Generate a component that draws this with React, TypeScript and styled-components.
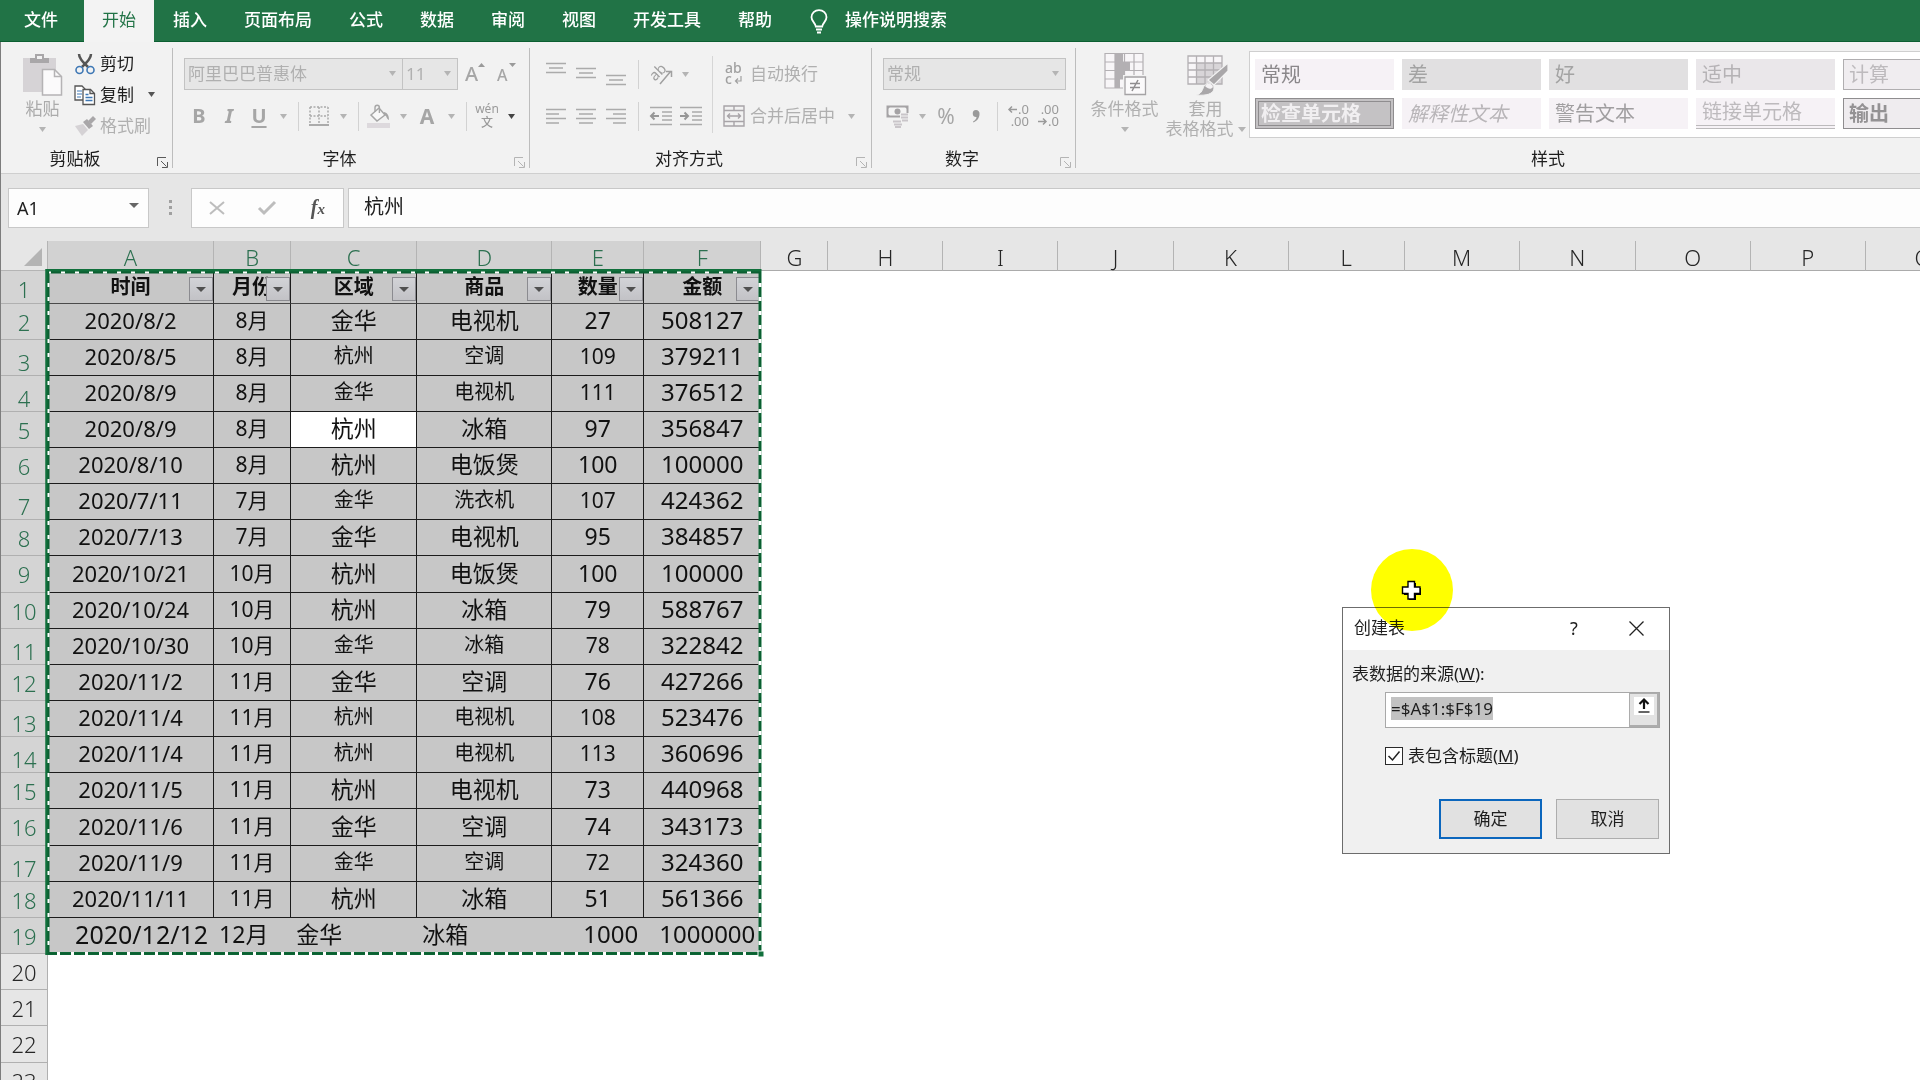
import React, { useEffect, useRef } from "react";
import styled, { createGlobalStyle, css } from "styled-components";

const GlobalStyle = createGlobalStyle`
  *, *::before, *::after { box-sizing: border-box; }
  html, body { margin: 0; padding: 0; }
  body {
    font-family: "Noto Sans", "Noto Sans CJK SC", sans-serif;
    font-size: 17px;
    line-height: 20px;
    color: #1e1e1e;
    background: #fff;
    overflow: hidden;
  }
  button, input, select { font: inherit; color: inherit; margin: 0; }
  button { padding: 0; border: 0; background: none; }
  svg { overflow: visible; }
`;

const Window = styled.div`
  position: relative;
  display: flex;
  flex-direction: column;
  height: 100vh;
  overflow: hidden;
`;

/* ---------- tab strip ---------- */

const TabStrip = styled.nav`
  display: flex;
  flex: none;
  height: 42px;
  background: #217346;
  border-bottom: 1px solid #0c5f32;
  color: #fff;
`;

const Tab = styled.button<{ $active?: boolean; $file?: boolean }>`
  height: 42px;
  padding: 0 18px 3px;
  margin-right: 1px;
  white-space: nowrap;
  font-weight: 500;
  ${(p) => p.$file && css`width: 84px; margin-right: 0; padding-right: 20px;`}
  ${(p) => p.$active && css`background: #f3f3f3; color: #217346; font-weight: 400;`}
`;

const TellMe = styled.button`
  display: flex;
  align-items: center;
  gap: 17px;
  height: 42px;
  margin-left: 19px;
  padding-bottom: 3px;
  font-weight: 500;
  svg { margin-top: 4px; }
`;

/* ---------- ribbon ---------- */

const Body = styled.main`
  display: flex;
  flex-direction: column;
  flex: 1;
  min-height: 0;
  border-left: 1px solid #7d7d7d;
`;

const Ribbon = styled.section`
  display: flex;
  flex: none;
  height: 132px;
  padding: 6px 0 5px;
  background: #f2f2f2;
  border-bottom: 1px solid #cfcfcf;
  overflow: hidden;
`;

const Group = styled.div<{ $w: number }>`
  display: flex;
  flex-direction: column;
  flex: none;
  width: ${(p) => p.$w}px;
  border-right: 1px solid #bdbdbd;
`;

const GroupBody = styled.div<{ $pad?: number }>`
  flex: 1;
  display: flex;
  min-height: 0;
  padding-left: ${(p) => p.$pad ?? 11}px;
`;

const GroupFooter = styled.div<{ $left?: number }>`
  display: flex;
  align-items: center;
  height: 20px;
  padding: 2px 4px 0 ${(p) => p.$left ?? 0}px;
  span { flex: 1; padding-right: 8px; text-align: center; }
`;

const Launch = styled.button<{ $dim?: boolean }>`
  display: flex;
  align-items: flex-end;
  width: 11px;
  height: 18px;
  color: ${(p) => (p.$dim ? "#b4b4b4" : "#5a5a5a")};
`;

const Rows = styled.div`
  display: flex;
  flex-direction: column;
  gap: 12px;
  padding-top: 10px;
`;

const Row = styled.div<{ $h: number }>`
  display: flex;
  align-items: center;
  height: ${(p) => p.$h}px;
`;

const Tool = styled.button<{ $w?: number; $size?: number; $bold?: boolean; $italic?: boolean; $line?: boolean }>`
  display: flex;
  align-items: center;
  justify-content: center;
  width: ${(p) => p.$w ?? 30}px;
  height: 28px;
  color: #a6a6a6;
  font-size: ${(p) => p.$size ?? 20}px;
  font-weight: ${(p) => (p.$bold ? 700 : 400)};
  font-style: ${(p) => (p.$italic ? "italic" : "normal")};
  text-decoration: ${(p) => (p.$line ? "underline" : "none")};
  text-underline-offset: 3px;
`;

const Divider = styled.span`
  width: 1px;
  height: 29px;
  margin: 0 5px 0 6px;
  background: #d2d2d2;
`;

const SelectBox = styled.span<{ $w: number }>`
  position: relative;
  width: ${(p) => p.$w}px;
  height: 32px;
  & + & { margin-left: -1px; margin-right: 1px; }
  select {
    width: 100%;
    height: 100%;
    padding: 0 3px;
    appearance: none;
    border: 1px solid #c3c3c3;
    border-radius: 0;
    background: #e6e6e6;
    color: #b0b0b0;
    opacity: 1;
  }
  svg { position: absolute; right: 7px; top: 13px; pointer-events: none; }
`;

const Paste = styled.button`
  display: flex;
  flex-direction: column;
  align-items: center;
  width: 41px;
  height: 100px;
  padding-top: 5px;
  gap: 3px;
  color: #ababab;
  svg:last-child { margin-top: 5px; }
`;

const ClipList = styled.div`
  display: flex;
  flex-direction: column;
  padding: 0 0 0 11px;
`;

const ClipButton = styled.button<{ $dim?: boolean }>`
  display: flex;
  align-items: center;
  gap: 4px;
  height: 31px;
  color: ${(p) => (p.$dim ? "#b0b0b0" : "#1e1e1e")};
  span { margin-right: 10px; }
`;

const AlignLeft = styled.div`
  width: 172px;
  height: 77px;
  margin-top: 8px;
  border-right: 1px solid #d6d6d6;
  ${Rows} { padding-top: 2px; }
  ${Divider} { margin: 0 7px; }
`;

const WideTool = styled.button`
  display: flex;
  align-items: center;
  gap: 3px;
  height: 28px;
  padding-left: 8px;
  color: #b0b0b0;
  > svg:first-child { width: 26px; }
  > svg:last-child:not(:first-child) { margin-left: 10px; }
`;

const BigTool = styled.button<{ $w: number }>`
  display: flex;
  flex-direction: column;
  align-items: center;
  width: ${(p) => p.$w}px;
  height: 96px;
  padding-top: 4px;
  gap: 3px;
  color: #b0b0b0;
  white-space: nowrap;
  > svg:last-child { margin-top: 5px; }
`;

const BigLine = styled.span`
  display: flex;
  align-items: center;
  gap: 4px;
  margin-top: -3px;
`;

const Gallery = styled.div`
  display: grid;
  grid-template-columns: repeat(5, 139px);
  grid-auto-rows: 31px;
  gap: 8px;
  flex: 1;
  height: 87px;
  margin-top: 3px;
  padding: 7px 5px;
  background: #fff;
  border: 1px solid #cfcfcf;
  overflow: hidden;
`;

type TileKind = "plain" | "grey" | "mid" | "check" | "italic" | "warn" | "link" | "box" | "boxbold";
const tileLook: Record<TileKind, ReturnType<typeof css>> = {
  plain: css`background: #f6f2f6; color: #8b888b;`,
  grey: css`background: #e1e0e1; color: #a3a3a3;`,
  mid: css`background: #eae7ea; color: #b5b2b5;`,
  check: css`background: #c4c2c4; color: #f1eff1; font-weight: 700; border: 4px double #8f8d8f; padding-left: 2px; line-height: 20px;`,
  italic: css`background: #f6f2f6; color: #b8b5b8; font-style: italic;`,
  warn: css`background: #f6f2f6; color: #a09ea0;`,
  link: css`background: #f6f2f6; color: #bdbabd; border-bottom: 4px double #bcbabc;`,
  box: css`background: #f0edf0; color: #bdbabd; border: 1px solid #b0aeb0; padding-left: 5px;`,
  boxbold: css`background: #efecef; color: #949294; font-weight: 700; border: 1px solid #8f8d8f; padding-left: 5px;`,
};
const Tile = styled.button<{ $kind: TileKind }>`
  height: 31px;
  padding-left: 6px;
  text-align: left;
  font-size: 20px;
  line-height: 24px;
  white-space: nowrap;
  overflow: hidden;
  ${(p) => tileLook[p.$kind]}
`;

/* ---------- formula bar ---------- */

const FormulaBar = styled.section`
  display: flex;
  align-items: center;
  flex: none;
  height: 67px;
  padding: 0 0 0 7px;
  background: #e6e6e6;
`;

const BarBox = styled.div<{ $w?: number }>`
  display: flex;
  align-items: center;
  height: 40px;
  background: #fdfdfd;
  border: 1px solid #c8c8c8;
  ${(p) => (p.$w ? css`width: ${p.$w}px;` : css`flex: 1; margin-left: 4px; border-right: 0;`)}
  input {
    flex: 1;
    min-width: 0;
    height: 100%;
    border: 0;
    outline: 0;
    background: none;
  }
`;
const NameInput = styled.input`
  padding: 0 0 0 8px;
  font-size: 18px;
`;
const FormulaInput = styled.input`
  padding: 0 0 4px 15px;
  font-size: 20px;
`;
const NameArrow = styled.button`
  display: flex;
  align-items: center;
  justify-content: center;
  width: 28px;
  height: 38px;
  padding-bottom: 4px;
`;
const Dots = styled.span`
  display: flex;
  justify-content: center;
  width: 42px;
`;
const FxButton = styled.button`
  display: flex;
  justify-content: center;
  width: 51px;
  color: #bdbdbd;
`;
const Fx = styled.span`
  color: #555;
  font-family: "Liberation Serif", serif;
  font-style: italic;
  font-weight: 700;
  font-size: 20px;
  small { font-size: 15px; }
`;

/* ---------- sheet ---------- */

const SheetArea = styled.section`
  position: relative;
  flex: 1;
  min-height: 0;
  overflow: hidden;
  background: #fff;
`;

const Sheet = styled.table`
  table-layout: fixed;
  width: 1980px;
  border-collapse: separate;
  border-spacing: 0;
`;

const SheetRow = styled.tr<{ $h: number }>`
  height: ${(p) => p.$h}px;
`;

const ColHead = styled.th<{ $on?: boolean }>`
  padding: 2px 0 0;
  font-size: 22px;
  font-weight: 300;
  line-height: 24px;
  background: ${(p) => (p.$on ? "#d2d2d2" : "#e6e6e6")};
  color: ${(p) => (p.$on ? "#2c7050" : "#262626")};
  border-right: 1px solid #b4b4b4;
  border-bottom: 1px solid #ababab;
`;

const Corner = styled.td`
  padding: 0 5px 4px;
  text-align: right;
  vertical-align: bottom;
  line-height: 0;
  background: #e6e6e6;
  border-right: 1px solid #b4b4b4;
  border-bottom: 1px solid #b4b4b4;
`;

const RowHead = styled.th<{ $on?: boolean; $drop?: number }>`
  padding: ${(p) => p.$drop ?? 0}px 0 0;
  font-size: 22px;
  font-weight: 300;
  line-height: 24px;
  background: ${(p) => (p.$on ? "#d4d4d4" : "#e6e6e6")};
  color: ${(p) => (p.$on ? "#2c7050" : "#262626")};
  border-right: 1px solid #b0b0b0;
  border-bottom: 1px solid #b0b0b0;
`;

const Cell = styled.td<{ $size: number; $align?: string; $open?: boolean; $active?: boolean; $head?: boolean }>`
  position: relative;
  padding: 0 5px ${(p) => (p.$head ? 0 : 3)}px;
  overflow: hidden;
  white-space: nowrap;
  font-size: ${(p) => p.$size}px;
  font-weight: ${(p) => (p.$head ? 700 : 400)};
  line-height: 28px;
  text-align: ${(p) => p.$align ?? "center"};
  color: #111;
  background: ${(p) => (p.$active ? "#fff" : "#c7c7c7")};
  border-right: 1px solid ${(p) => (p.$open ? "#c7c7c7" : "#1c1c1c")};
  border-bottom: 1px solid ${(p) => (p.$head ? "#4a4a4a" : "#1c1c1c")};
`;

const FilterButton = styled.button`
  position: absolute;
  right: 0;
  bottom: 2px;
  display: flex;
  align-items: center;
  justify-content: center;
  width: 24px;
  height: 24px;
  border: 1px solid #8b8b90;
  background: linear-gradient(#d2d3d7, #c2c2c6);
  color: #505050;
`;

const Marquee = styled.svg`
  position: absolute;
  left: 0;
  top: 0;
  pointer-events: none;
`;

/* ---------- dialog ---------- */

const Dialog = styled.form`
  position: absolute;
  left: 1342px;
  top: 607px;
  width: 328px;
  background: #f0f0f0;
  border: 1px solid #6c6c6c;
`;
const DialogTitle = styled.header`
  display: flex;
  align-items: center;
  height: 42px;
  padding: 0 2px 2px 11px;
  background: #fff;
  h2 { flex: 1; margin: 0; font-size: 17px; font-weight: 400; }
`;
const TitleButton = styled.button`
  display: flex;
  align-items: center;
  justify-content: center;
  width: 62px;
  height: 40px;
  font-size: 18px;
`;
const DialogBody = styled.div`
  padding: 14px 9px 14px 9px;
  label { display: block; }
`;
const RangeField = styled.div`
  display: flex;
  height: 36px;
  margin: 8px 0 0 33px;
  border: 1px solid #a8a8a8;
  background: #fff;
  input {
    flex: 1;
    min-width: 0;
    height: 100%;
    padding: 0 5px 4px;
    border: 0;
    outline: 0;
    background: none;
  }
  input::selection { background: #c2c2c2; color: #1e1e1e; }
`;
const RangeButton = styled.button`
  display: flex;
  justify-content: center;
  width: 30px;
  padding-top: 3px;
  background: #e3e3e3;
  border: 2px solid #acacac;
  border-width: 1px 2px 2px 1px;
`;
const CheckRow = styled.div`
  display: flex;
  align-items: center;
  gap: 5px;
  margin: 18px 0 0 33px;
`;
const CheckBox = styled.span`
  position: relative;
  display: flex;
  input {
    width: 18px;
    height: 18px;
    appearance: none;
    border: 1px solid #2a2a2a;
    background: #fff;
  }
  svg { position: absolute; left: 2px; top: 2px; pointer-events: none; }
`;
const DialogButtons = styled.div`
  display: flex;
  justify-content: flex-end;
  gap: 14px;
  margin-top: 33px;
  padding-right: 1px;
`;
const DialogButton = styled.button<{ $primary?: boolean }>`
  width: 103px;
  height: 40px;
  background: #e1e1e1;
  border: ${(p) => (p.$primary ? "2px solid #0b66bd" : "1px solid #adadad")};
`;

const Halo = styled.div`
  position: absolute;
  left: 1371px;
  top: 549px;
  width: 82px;
  height: 82px;
  border-radius: 50%;
  background: #ffff00;
  mix-blend-mode: multiply;
  pointer-events: none;
`;
const Pointer = styled.svg`
  position: absolute;
  left: 1401px;
  top: 580px;
  pointer-events: none;
`;

/* ---------- drawings ---------- */

const Caret = ({ color = "#b4b4b4", w = 7 }: { color?: string; w?: number }) => (
  <svg width={w} height="5" viewBox="0 0 8 5" fill={color} preserveAspectRatio="none" aria-hidden="true">
    <path d="M0 0h8L4 5z" />
  </svg>
);

const CaretTool = ({ label, color }: { label: string; color?: string }) => (
  <Tool $w={18} aria-label={label}><Caret color={color} /></Tool>
);

const LaunchIcon = () => (
  <svg width="11" height="11" viewBox="0 0 11 11" fill="none" stroke="currentColor" aria-hidden="true">
    <path d="M.5 9V.5H9M4 4l5.500 5.500M10.500 5v5.500H5" />
  </svg>
);

const Lines = ({ d, w = 20, h = 20, sw = 1.5 }: { d: string; w?: number; h?: number; sw?: number }) => (
  <svg width={w} height={h} viewBox={`0 0 ${w} ${h}`} fill="none" stroke="#ababab" strokeWidth={sw} aria-hidden="true">
    <path d={d} />
  </svg>
);

const BulbIcon = () => (
  <svg width="18" height="25" viewBox="0 0 18 25" fill="none" stroke="#fff" strokeWidth="1.8" aria-hidden="true">
    <path d="M5.800 17.500C5.500 13.800 1.500 12.500 1.500 8.300a7.500 7.200 0 0 1 15 0c0 4.200-4 5.500-4.300 9.200zM6 20.500h6M7 23.500h4" />
  </svg>
);

const PasteIcon = () => (
  <svg width="41" height="43" viewBox="0 0 41 43" aria-hidden="true">
    <path d="M1 5h33v34H1z" fill="#d6d3d6" />
    <path d="M8 10V5h5V1h9v4h5v5z" fill="#a9a7a9" />
    <path d="M15 3h5v3h-5z" fill="#f2f2f2" />
    <path d="M20.500 16.500h12l7 7v18.500h-19z" fill="#fbfafb" stroke="#b5b3b5" strokeWidth="1.500" />
    <path d="M32.500 16.500v7h7" fill="none" stroke="#b5b3b5" strokeWidth="1.500" />
  </svg>
);

const CutIcon = () => (
  <svg width="22" height="22" viewBox="0 0 22 22" fill="none" aria-hidden="true">
    <path d="M5 1c0 4 3 7 9 13M17 1c0 4-3 7-9 13" stroke="#555" strokeWidth="2.500" />
    <circle cx="5.500" cy="17" r="3.500" stroke="#3f78b5" strokeWidth="1.600" />
    <circle cx="16.500" cy="17" r="3.500" stroke="#3f78b5" strokeWidth="1.600" />
  </svg>
);

const CopyIcon = () => (
  <svg width="22" height="22" viewBox="0 0 22 22" aria-hidden="true">
    <path d="M1 2h7l3 3v11H1z" fill="#fff" stroke="#555" strokeWidth="1.300" />
    <path d="M3 7h5M3 10h5M3 13h4" stroke="#3f78b5" strokeWidth="1.200" />
    <path d="M9 5.500h7.500l4 4V20.500H9z" fill="#fff" stroke="#555" strokeWidth="1.300" />
    <path d="M16 5.500v4h4.500" fill="none" stroke="#555" strokeWidth="1.300" />
    <path d="M11.500 10.500h3M11.500 13.500h7M11.500 16.500h7" stroke="#3f78b5" strokeWidth="1.300" />
  </svg>
);

const BrushIcon = () => (
  <svg width="22" height="22" viewBox="0 0 22 22" aria-hidden="true">
    <path d="M1 11l8-2 5 6-6 6z" fill="#d5d2d5" />
    <path d="M9 7l4-3 6 7-4 3z" fill="#a9a7a9" />
    <path d="M14 6l5-5 3 3-5 5z" fill="#a9a7a9" />
  </svg>
);

const GrowFont = ({ down }: { down?: boolean }) => (
  <svg width="22" height="22" viewBox="0 0 22 22" aria-hidden="true">
    <text x="1" y="18" fontSize={down ? 16 : 20} fontWeight="500" fill="#a6a6a6">A</text>
    <path d={down ? "M13 0h7l-3.500 4z" : "M14 4h7l-3.500-4z"} fill="#9a9a9a" />
  </svg>
);

const BorderIcon = () => (
  <svg width="20" height="20" viewBox="0 0 20 20" fill="none" stroke="#ababab" strokeWidth="1.500" aria-hidden="true">
    <path d="M1 1h18M1 10h18M1 1v17M10 1v17M19 1v17" strokeDasharray="2 1.500" />
    <path d="M0 19h20" strokeWidth="2" />
  </svg>
);

const BucketIcon = () => (
  <svg width="24" height="24" viewBox="0 0 24 24" aria-hidden="true">
    <path d="M4 11l8-7 6 7-8 6z" fill="#f8f8f8" stroke="#a6a6a6" strokeWidth="1.500" />
    <path d="M8 8V3.500a2.200 2.200 0 0 1 4.400 0V9" fill="none" stroke="#a6a6a6" strokeWidth="1.400" />
    <path d="M17 8c4 1 5 4 5 8-3-1-2-5-5-5z" fill="#a6a6a6" />
    <path d="M0 19h23v5H0z" fill="#ddd9dd" />
  </svg>
);

const PhoneticIcon = () => (
  <svg width="24" height="26" viewBox="0 0 24 26" fill="#9a9a9a" aria-hidden="true">
    <text x="12" y="10" fontSize="12" textAnchor="middle">wén</text>
    <text x="12" y="24" fontSize="12" textAnchor="middle" fontWeight="500">文</text>
  </svg>
);

const OrientIcon = () => (
  <svg width="24" height="24" viewBox="0 0 24 24" aria-hidden="true">
    <text x="4" y="19" fontSize="15" fill="#a0a0a0" transform="rotate(-45 6 17)">ab</text>
    <path d="M11 22L22 9M17 9.500h5.500V15" fill="none" stroke="#a0a0a0" strokeWidth="1.500" />
  </svg>
);

const WrapIcon = () => (
  <svg width="26" height="24" viewBox="0 0 26 24" fill="#a0a0a0" aria-hidden="true">
    <text x="4" y="11" fontSize="14" fontWeight="500">ab</text>
    <text x="4" y="22" fontSize="14" fontWeight="500">c</text>
    <path d="M20 14v5h-5M17 16.500L14.500 19l2.500 2.500" fill="none" stroke="#a0a0a0" strokeWidth="1.200" />
  </svg>
);

const MergeIcon = () => (
  <svg width="26" height="22" viewBox="0 0 26 22" fill="none" stroke="#a8a4a8" strokeWidth="1.400" aria-hidden="true">
    <path d="M3 1h20v20H3zM3 5.500h20M3 16.500h20M13 1v4.500M13 16.500V21M6.500 11h13M9 8.500L6.500 11 9 13.500M17 8.500l2.500 2.500-2.500 2.500" />
  </svg>
);

const IndentIcon = ({ out }: { out?: boolean }) => (
  <svg width="22" height="20" viewBox="0 0 22 20" fill="none" stroke="#ababab" strokeWidth="1.500" aria-hidden="true">
    <path d="M0 1.500h22M12 6h10M12 10h10M12 14h10M0 18.500h22" />
    <path d={out ? "M1 10h8M4.500 6.500L1 10l3.500 3.500" : "M0 10h8M4.500 6.500L8 10l-3.500 3.500"} stroke="#979797" strokeWidth="2" />
  </svg>
);

const CurrencyIcon = () => (
  <svg width="24" height="24" viewBox="0 0 24 24" aria-hidden="true">
    <path d="M1.500 2.500h20v10h-20z" fill="#f4f4f4" stroke="#a5a3a5" strokeWidth="2" />
    <path d="M1 2h4L1 6zM22 2v4l-4-4zM1 13V9l4 4z" fill="#a5a3a5" />
    <circle cx="11.500" cy="7.500" r="3" fill="#a5a3a5" />
    <path d="M14 9h9v6h-9z" fill="#f2f2f2" />
    <path d="M15 10.500h7M15 13.500h7M7 17.500h8M16 16.500h6M8 20.500h8M9 23h6" stroke="#c9c5c9" strokeWidth="1.800" />
  </svg>
);

const DecimalIcon = ({ less }: { less?: boolean }) => (
  <svg width="24" height="26" viewBox="0 0 24 26" fill="#9a9a9a" aria-hidden="true">
    <text x="23" y="11" fontSize="13" textAnchor="end">{less ? ".00" : ".0"}</text>
    <text x="23" y="23" fontSize="13" textAnchor="end">{less ? ".0" : ".00"}</text>
    <path
      d={less ? "M2 18.500h8M7 15.500l3 3-3 3" : "M11 6.500H3M6 3.500l-3 3 3 3"}
      fill="none" stroke="#9a9a9a" strokeWidth="1.500"
    />
  </svg>
);

const ConditionIcon = () => (
  <svg width="44" height="44" viewBox="0 0 44 44" aria-hidden="true">
    <path d="M2 2h38v34H2z" fill="#f8f6f8" />
    <path d="M12 2h8v8h7v9h-5v8h-5v9h-5z" fill="#b3b0b3" />
    <path d="M2 1.500h38V36H2zM2 10h38M2 18.500h38M2 27h38M12 1.500V36M21.500 1.500V36M31 1.500V36" fill="none" stroke="#b3b0b3" strokeWidth="1.200" />
    <path d="M20 23h24v21H20z" fill="#f2f2f2" />
    <path d="M22 25h20.500v17.500H22z" fill="#fbfafb" stroke="#a5a3a5" strokeWidth="1.300" />
    <path d="M27 31.500h10M27 35.500h10M35 28l-6 11" stroke="#8f8d8f" strokeWidth="1.500" />
  </svg>
);

const TableStyleIcon = () => (
  <svg width="44" height="44" viewBox="0 0 44 44" aria-hidden="true">
    <path d="M4 4h34v28H4z" fill="#f8f6f8" />
    <path d="M13 11h25v21H13z" fill="#d8d5d8" />
    <path d="M4 4h34v28H4zM4 11h34M4 18h34M4 25h34M12.500 4v28M21 4v28M29.500 4v28" fill="none" stroke="#b3b0b3" strokeWidth="1.300" />
    <path d="M44 11v8L30 33l-6-5z" fill="#a9a7a9" stroke="#f2f2f2" strokeWidth="1.200" />
    <path d="M12 43c5-1 6-4 8-9 3-5 10-3 10 2 0 6-8 8-18 7z" fill="#a9a7a9" stroke="#f2f2f2" />
    <path d="M21 34c2-4 7-3 8 1-2 3-5 2-8-1z" fill="#f4f2f4" />
  </svg>
);

/* ---------- data ---------- */

const menuTabs = ["开始", "插入", "页面布局", "公式", "数据", "审阅", "视图", "开发工具", "帮助"];

const tiles: [string, TileKind][] = [
  ["常规", "plain"], ["差", "grey"], ["好", "grey"], ["适中", "mid"], ["计算", "box"],
  ["检查单元格", "check"], ["解释性文本", "italic"], ["警告文本", "warn"], ["链接单元格", "link"], ["输出", "boxbold"],
];

const columns: [string, number][] = [
  ["A", 166], ["B", 77], ["C", 126], ["D", 135], ["E", 92], ["F", 117], ["G", 67],
  ["H", 115], ["I", 115], ["J", 115], ["K", 115], ["L", 116], ["M", 115], ["N", 116], ["O", 115], ["P", 115], ["Q", 115],
];

const headings = ["时间", "月份", "区域", "商品", "数量", "金额"];

const records: string[][] = [
  ["2020/8/2", "8月", "金华", "电视机", "27", "508127"],
  ["2020/8/5", "8月", "杭州", "空调", "109", "379211"],
  ["2020/8/9", "8月", "金华", "电视机", "111", "376512"],
  ["2020/8/9", "8月", "杭州", "冰箱", "97", "356847"],
  ["2020/8/10", "8月", "杭州", "电饭煲", "100", "100000"],
  ["2020/7/11", "7月", "金华", "洗衣机", "107", "424362"],
  ["2020/7/13", "7月", "金华", "电视机", "95", "384857"],
  ["2020/10/21", "10月", "杭州", "电饭煲", "100", "100000"],
  ["2020/10/24", "10月", "杭州", "冰箱", "79", "588767"],
  ["2020/10/30", "10月", "金华", "冰箱", "78", "322842"],
  ["2020/11/2", "11月", "金华", "空调", "76", "427266"],
  ["2020/11/4", "11月", "杭州", "电视机", "108", "523476"],
  ["2020/11/4", "11月", "杭州", "电视机", "113", "360696"],
  ["2020/11/5", "11月", "杭州", "电视机", "73", "440968"],
  ["2020/11/6", "11月", "金华", "空调", "74", "343173"],
  ["2020/11/9", "11月", "金华", "空调", "72", "324360"],
  ["2020/11/11", "11月", "杭州", "冰箱", "51", "561366"],
];
const lastRecord = ["2020/12/12", "12月", "金华", "冰箱", "1000", "1000000"];
const lastAlign = ["right", "left", "left", "left", "right", "right"];
const lastSize = [25, 23, 23, 23, 24, 24];

const smallRows = new Set([3, 4, 7, 11, 13, 14, 17]);
const tallRows = new Set([9, 16, 22]);
const rowHeight = (n: number) => (tallRows.has(n) ? 37 : 36);
const sizeOf = (row: number, col: number) => {
  if (col === 0) return 22;
  if (col === 1) return 21;
  if (col === 5) return 24;
  return smallRows.has(row) ? (col === 4 ? 21 : 20) : 23;
};

/* ---------- parts ---------- */

const GroupLabel = ({ name, dim, left }: { name: string; dim?: boolean; left?: number }) => (
  <GroupFooter $left={left}>
    <span>{name}</span>
    <Launch $dim={dim} aria-label={`${name}设置`}><LaunchIcon /></Launch>
  </GroupFooter>
);

const Picker = ({ w, label, value }: { w: number; label: string; value: string }) => (
  <SelectBox $w={w}>
    <select aria-label={label} disabled defaultValue={value}><option>{value}</option></select>
    <Caret />
  </SelectBox>
);

const RibbonView = () => (
  <Ribbon>
    <Group $w={172}>
      <GroupBody $pad={21}>
        <Paste>
          <PasteIcon />
          粘贴
          <Caret />
        </Paste>
        <ClipList>
          <ClipButton><CutIcon />剪切</ClipButton>
          <ClipButton><CopyIcon /><span>复制</span><Caret color="#555" /></ClipButton>
          <ClipButton $dim><BrushIcon />格式刷</ClipButton>
        </ClipList>
      </GroupBody>
      <GroupLabel name="剪贴板" />
    </Group>

    <Group $w={357}>
      <GroupBody>
        <Rows>
          <Row $h={32}>
            <Picker w={219} label="字体" value="阿里巴巴普惠体" />
            <Picker w={56} label="字号" value="11" />
            <Tool $w={32} aria-label="增大字号"><GrowFont /></Tool>
            <Tool $w={32} aria-label="减小字号"><GrowFont down /></Tool>
          </Row>
          <Row $h={28}>
            <Tool $bold>B</Tool>
            <Tool $italic $bold>I</Tool>
            <Tool $bold $line>U</Tool>
            <CaretTool label="下划线样式" />
            <Divider />
            <Tool aria-label="边框"><BorderIcon /></Tool>
            <CaretTool label="边框样式" />
            <Divider />
            <Tool aria-label="填充颜色"><BucketIcon /></Tool>
            <CaretTool label="填充颜色列表" />
            <Tool $bold $size={21}>A</Tool>
            <CaretTool label="字体颜色列表" />
            <Divider />
            <Tool aria-label="拼音"><PhoneticIcon /></Tool>
            <CaretTool label="拼音选项" color="#444" />
          </Row>
        </Rows>
      </GroupBody>
      <GroupLabel name="字体" dim />
    </Group>

    <Group $w={342}>
      <GroupBody>
        <AlignLeft>
          <Rows>
            <Row $h={32}>
              <Tool aria-label="顶端对齐"><Lines d="M0 3.500h20M3 8h14M0 12.500h20" h={28} /></Tool>
              <Tool aria-label="垂直居中"><Lines d="M0 8.500h20M3 13h14M0 17.500h20" h={28} /></Tool>
              <Tool aria-label="底端对齐"><Lines d="M0 15.500h20M3 20h14M0 24.500h20" h={28} /></Tool>
              <Divider />
              <Tool aria-label="方向"><OrientIcon /></Tool>
              <CaretTool label="方向选项" />
            </Row>
            <Row $h={28}>
              <Tool aria-label="左对齐"><Lines d="M0 3.500h20M0 8h13M0 12.500h20M0 17h13" /></Tool>
              <Tool aria-label="居中"><Lines d="M0 3.500h20M3 8h14M0 12.500h20M3 17h14" /></Tool>
              <Tool aria-label="右对齐"><Lines d="M0 3.500h20M7 8h13M0 12.500h20M7 17h13" /></Tool>
              <Divider />
              <Tool aria-label="减少缩进量"><IndentIcon out /></Tool>
              <Tool aria-label="增加缩进量"><IndentIcon /></Tool>
            </Row>
          </Rows>
        </AlignLeft>
        <Rows>
          <Row $h={32}><WideTool><WrapIcon />自动换行</WideTool></Row>
          <Row $h={28}><WideTool><MergeIcon />合并后居中<Caret /></WideTool></Row>
        </Rows>
      </GroupBody>
      <GroupLabel name="对齐方式" dim />
    </Group>

    <Group $w={204}>
      <GroupBody>
        <Rows>
          <Row $h={32}><Picker w={183} label="数字格式" value="常规" /></Row>
          <Row $h={28}>
            <Tool aria-label="会计数字格式"><CurrencyIcon /></Tool>
            <CaretTool label="会计数字格式列表" />
            <Tool $size={21}>%</Tool>
            <Tool aria-label="千位分隔样式">
              <svg width="8" height="13" viewBox="0 0 8 13" fill="#9a9a9a" aria-hidden="true">
                <path d="M4 0a3.500 3.500 0 0 1 3.500 4C7.500 8 5 11 1.500 12.500l-.5-1C3.500 10 4.500 8.500 4.500 7A3.500 3.500 0 1 1 4 0z" />
              </svg>
            </Tool>
            <Divider />
            <Tool aria-label="增加小数位数"><DecimalIcon /></Tool>
            <Tool aria-label="减少小数位数"><DecimalIcon less /></Tool>
          </Row>
        </Rows>
      </GroupBody>
      <GroupLabel name="数字" dim />
    </Group>

    <Group $w={944}>
      <GroupBody>
        <BigTool $w={75}>
          <ConditionIcon />
          条件格式
          <Caret w={8} />
        </BigTool>
        <BigTool $w={87}>
          <TableStyleIcon />
          套用
          <BigLine>表格格式<Caret w={8} /></BigLine>
        </BigTool>
        <Gallery>
          {tiles.map(([name, kind]) => <Tile key={name} $kind={kind}>{name}</Tile>)}
        </Gallery>
      </GroupBody>
      <GroupLabel name="样式" dim left={24} />
    </Group>
  </Ribbon>
);

const SheetView = () => (
  <SheetArea>
    <Sheet>
      <colgroup>
        <col style={{ width: 47 }} />
        {columns.map(([name, w]) => <col key={name} style={{ width: w }} />)}
      </colgroup>
      <thead>
        <SheetRow $h={30}>
          <Corner>
            <svg width="18" height="18" viewBox="0 0 18 18" fill="#b4b4b4" aria-hidden="true"><path d="M18 0v18H0z" /></svg>
          </Corner>
          {columns.map(([name], i) => <ColHead key={name} scope="col" $on={i < 6}>{name}</ColHead>)}
        </SheetRow>
      </thead>
      <tbody>
        <SheetRow $h={33}>
          <RowHead scope="row" $on $drop={4}>1</RowHead>
          {headings.map((h) => (
            <Cell key={h} $size={20} $head>
              {h}
              <FilterButton aria-label={`筛选${h}`}><Caret color="#505050" w={10} /></FilterButton>
            </Cell>
          ))}
        </SheetRow>
        {records.map((record, i) => {
          const n = i + 2;
          return (
            <SheetRow key={n} $h={rowHeight(n)}>
              <RowHead scope="row" $on $drop={smallRows.has(n) ? 8 : 0}>{n}</RowHead>
              {record.map((value, c) => (
                <Cell key={c} $size={sizeOf(n, c)} $active={n === 5 && c === 2}>{value}</Cell>
              ))}
            </SheetRow>
          );
        })}
        <SheetRow $h={36}>
          <RowHead scope="row" $on>19</RowHead>
          {lastRecord.map((value, c) => (
            <Cell key={c} $size={lastSize[c]} $align={lastAlign[c]} $open>{value}</Cell>
          ))}
        </SheetRow>
        {[20, 21, 22, 23].map((n) => (
          <SheetRow key={n} $h={rowHeight(n)}><RowHead scope="row">{n}</RowHead></SheetRow>
        ))}
      </tbody>
    </Sheet>
    <Marquee width="770" height="722" viewBox="0 0 770 722" fill="none" aria-hidden="true">
      <path d="M46 30V712.500H759V29.500H44.500" stroke="#11703c" strokeWidth="3" />
      <path d="M46 28V714" stroke="#11703c" strokeWidth="3" />
      <path d="M47.500 31.500H759V712.500H47.500z" stroke="#0b5f31" strokeWidth="2" />
      <path d="M48 31.500H758" stroke="#fff" strokeWidth="2" strokeDasharray="4 10" strokeDashoffset="-12" />
      <path d="M47.500 42V710" stroke="#fff" strokeWidth="2" strokeDasharray="4 10" />
      <path d="M759 42V706" stroke="#fff" strokeWidth="3" strokeDasharray="4 10" />
      <path d="M56 712.500H754" stroke="#fff" strokeWidth="3" strokeDasharray="3 11" />
      <path d="M757 710h6v6h-6z" fill="#11703c" stroke="#fff" />
    </Marquee>
  </SheetArea>
);

const CreateTableDialog = () => {
  const range = useRef<HTMLInputElement>(null);
  useEffect(() => {
    range.current?.focus();
    range.current?.select();
  }, []);
  return (
    <Dialog aria-label="创建表" onSubmit={(e) => e.preventDefault()}>
      <DialogTitle>
        <h2>创建表</h2>
        <TitleButton type="button" aria-label="帮助">?</TitleButton>
        <TitleButton type="button" aria-label="关闭">
          <svg width="15" height="15" viewBox="0 0 15 15" stroke="#222" strokeWidth="1.300" aria-hidden="true">
            <path d="M.5.500l14 14M14.500.500l-14 14" />
          </svg>
        </TitleButton>
      </DialogTitle>
      <DialogBody>
        <label htmlFor="range">表数据的来源(<u>W</u>):</label>
        <RangeField>
          <input id="range" ref={range} defaultValue="=$A$1:$F$19" />
          <RangeButton type="button" aria-label="折叠对话框">
            <svg width="20" height="18" viewBox="0 0 20 18" aria-hidden="true">
              <path d="M0 0h20v18H0z" fill="#fff" />
              <path d="M10 12V3M5.500 7L10 2.500 14.500 7" fill="none" stroke="#111" strokeWidth="2.200" />
              <path d="M4.500 15h11" stroke="#111" strokeWidth="1.300" />
            </svg>
          </RangeButton>
        </RangeField>
        <CheckRow>
          <CheckBox>
            <input id="has-header" type="checkbox" defaultChecked />
            <svg width="14" height="14" viewBox="0 0 14 14" fill="none" stroke="#222" strokeWidth="1.500" aria-hidden="true">
              <path d="M1.500 7l4 4 7-8.500" />
            </svg>
          </CheckBox>
          <label htmlFor="has-header">表包含标题(<u>M</u>)</label>
        </CheckRow>
        <DialogButtons>
          <DialogButton $primary type="submit">确定</DialogButton>
          <DialogButton type="button">取消</DialogButton>
        </DialogButtons>
      </DialogBody>
    </Dialog>
  );
};

export default function App() {
  return (
    <Window>
      <GlobalStyle />
      <TabStrip>
        <Tab $file>文件</Tab>
        {menuTabs.map((name, i) => <Tab key={name} $active={i === 0}>{name}</Tab>)}
        <TellMe><BulbIcon />操作说明搜索</TellMe>
      </TabStrip>
      <Body>
        <RibbonView />
        <FormulaBar>
          <BarBox $w={141}>
            <NameInput aria-label="名称框" defaultValue="A1" />
            <NameArrow aria-label="名称列表"><Caret color="#666" w={10} /></NameArrow>
          </BarBox>
          <Dots>
            <svg width="3" height="16" viewBox="0 0 3 16" fill="#a0a0a0" aria-hidden="true">
              <path d="M0 0h3v3H0zM0 6h3v3H0zM0 12h3v3H0z" />
            </svg>
          </Dots>
          <BarBox $w={153}>
            <FxButton aria-label="取消">
              <svg width="16" height="14" viewBox="0 0 16 14" fill="none" stroke="currentColor" strokeWidth="2" aria-hidden="true"><path d="M1 1l14 12M15 1L1 13" /></svg>
            </FxButton>
            <FxButton aria-label="输入">
              <svg width="18" height="14" viewBox="0 0 18 14" fill="none" stroke="currentColor" strokeWidth="3" aria-hidden="true"><path d="M1 7l5 5L17 1" /></svg>
            </FxButton>
            <FxButton aria-label="插入函数"><Fx>f<small>x</small></Fx></FxButton>
          </BarBox>
          <BarBox><FormulaInput aria-label="编辑栏" defaultValue="杭州" /></BarBox>
        </FormulaBar>
        <SheetView />
      </Body>
      <CreateTableDialog />
      <Halo />
      <Pointer width="22" height="22" viewBox="0 0 22 22" aria-hidden="true">
        <path d="M8 3h7v5h5v7h-5v5H8v-5H3V8h5z" fill="#000" />
        <path d="M7 1.500h6.500v5.500h5.500v6.500h-5.500v5.500H7v-5.500H1.500V7H7z" fill="#fff" stroke="#000" strokeWidth="1.400" />
      </Pointer>
    </Window>
  );
}
